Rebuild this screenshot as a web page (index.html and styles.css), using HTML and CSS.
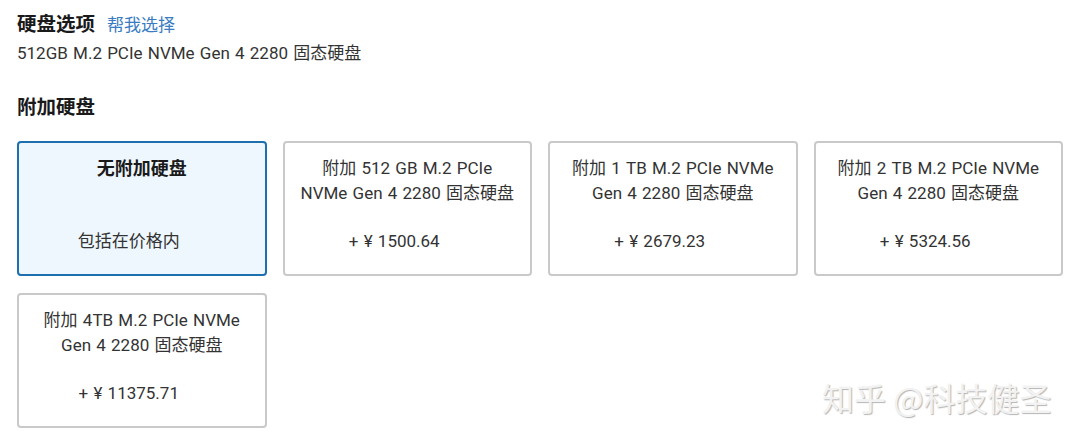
FILE: index.html
```html
<!DOCTYPE html>
<html lang="zh-CN">
<head>
<meta charset="utf-8">
<link rel="stylesheet" href="styles.css">
</head>
<body>
<div class="page">
  <div class="head-row">
    <h2 class="title">硬盘选项</h2>
    <a class="help" href="#">帮我选择</a>
  </div>
  <div class="current">512GB M.2 PCIe NVMe Gen 4 2280 固态硬盘</div>
  <h2 class="title section">附加硬盘</h2>
  <div class="grid">
    <div class="card selected">
      <div class="name bold">无附加硬盘</div>
      <div class="price">包括在价格内</div>
    </div>
    <div class="card">
      <div class="name">附加 512 GB M.2 PCIe NVMe Gen 4 2280 固态硬盘</div>
      <div class="price">+ ¥ 1500.64</div>
    </div>
    <div class="card">
      <div class="name">附加 1 TB M.2 PCIe NVMe Gen 4 2280 固态硬盘</div>
      <div class="price">+ ¥ 2679.23</div>
    </div>
    <div class="card">
      <div class="name">附加 2 TB M.2 PCIe NVMe Gen 4 2280 固态硬盘</div>
      <div class="price">+ ¥ 5324.56</div>
    </div>
    <div class="card">
      <div class="name">附加 4TB M.2 PCIe NVMe Gen 4 2280 固态硬盘</div>
      <div class="price">+ ¥ 11375.71</div>
    </div>
  </div>
  <div class="watermark">知乎 @科技健圣</div>
</div>
</body>
</html>
```
FILE: styles.css
```css
html, body {
  margin: 0;
  padding: 0;
  background: #ffffff;
}
body {
  font-family: Roboto, "Noto Sans CJK SC", sans-serif;
  color: #333333;
  word-spacing: 1px;
}
.page {
  position: relative;
  width: 1080px;
  height: 443px;
  box-sizing: border-box;
  padding: 11px 17px 0 17px;
  overflow: hidden;
}
.head-row {
  display: flex;
  align-items: baseline;
  gap: 12px;
  height: 27px;
}
.title {
  margin: 0;
  font-size: 19.5px;
  line-height: 27px;
  font-weight: 700;
  color: #1a1a1a;
}
.help {
  font-size: 17px;
  line-height: 27px;
  color: #3a7cc2;
  text-decoration: none;
}
.current {
  margin-top: 3px;
  font-size: 17px;
  line-height: 24px;
  color: #333333;
}
.section {
  margin-top: 29px;
}
.grid {
  margin-top: 20px;
  display: grid;
  grid-template-columns: repeat(4, 1fr);
  column-gap: 16px;
  row-gap: 17px;
  width: 1046px;
}
.card {
  box-sizing: border-box;
  height: 135px;
  border: 2px solid #c9c9c9;
  border-radius: 4px;
  padding: 13px 15px 0 15px;
  text-align: center;
  font-size: 17px;
  line-height: 25px;
  color: #333333;
  background: #ffffff;
}
.card.selected {
  border-color: #1d6fae;
  background: #eef7fe;
}
.name {
  min-height: 50px;
}
.name.bold {
  font-size: 18px;
  font-weight: 700;
  color: #1a1a1a;
}
.price {
  margin-top: 23px;
  padding-right: 26px;
}
.watermark {
  position: absolute;
  left: 822px;
  top: 376px;
  font-family: "Noto Sans CJK SC", sans-serif;
  font-size: 32px;
  line-height: 42px;
  color: #f2f2f2;
  text-shadow: 1px 1px 1px #b5b5b5, -1px -1px 0 #ffffff;
  white-space: nowrap;
  word-spacing: 0;
}
```
